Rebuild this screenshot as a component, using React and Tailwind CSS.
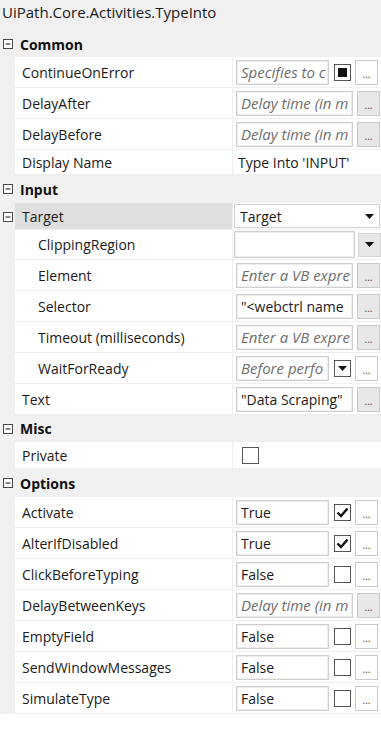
import React from "react";

const rows = [
  { type: "cat", label: "Common", h: "h-[26px]" },
  { label: "ContinueOnError", h: "h-[31px]", value: { kind: "box", text: "Specifies to c", ph: true, check: "square", btn: "white" } },
  { label: "DelayAfter", h: "h-[31px]", value: { kind: "box", text: "Delay time (in m", ph: true, btn: "gray" } },
  { label: "DelayBefore", h: "h-[31px]", value: { kind: "box", text: "Delay time (in m", ph: true, btn: "gray" } },
  { label: "Display Name", h: "h-[25px]", value: { kind: "plain", text: "Type Into 'INPUT'" } },
  { type: "cat", label: "Input", h: "h-[28px]" },
  { label: "Target", h: "h-[27px]", group: true, value: { kind: "combo", text: "Target" } },
  { label: "ClippingRegion", h: "h-[30px]", sub: true, value: { kind: "clip" } },
  { label: "Element", h: "h-[31px]", sub: true, value: { kind: "box", text: "Enter a VB expre", ph: true, btn: "gray" } },
  { label: "Selector", h: "h-[31px]", sub: true, value: { kind: "box", text: "\"<webctrl name", btn: "gray" } },
  { label: "Timeout (milliseconds)", h: "h-[31px]", sub: true, value: { kind: "box", text: "Enter a VB expre", ph: true, btn: "gray" } },
  { label: "WaitForReady", h: "h-[31px]", sub: true, value: { kind: "box", text: "Before perfo", ph: true, check: "drop", btn: "white" } },
  { label: "Text", h: "h-[31px]", value: { kind: "box", text: "\"Data Scraping\"", btn: "gray" } },
  { type: "cat", label: "Misc", h: "h-[27px]" },
  { label: "Private", h: "h-[27px]", value: { kind: "check" } },
  { type: "cat", label: "Options", h: "h-[28px]" },
  { label: "Activate", h: "h-[31px]", value: { kind: "box", text: "True", check: "checked", btn: "white" } },
  { label: "AlterIfDisabled", h: "h-[31px]", value: { kind: "box", text: "True", check: "checked", btn: "white" } },
  { label: "ClickBeforeTyping", h: "h-[31px]", value: { kind: "box", text: "False", check: "empty", btn: "white" } },
  { label: "DelayBetweenKeys", h: "h-[31px]", value: { kind: "box", text: "Delay time (in m", ph: true, btn: "gray" } },
  { label: "EmptyField", h: "h-[31px]", value: { kind: "box", text: "False", check: "empty", btn: "white" } },
  { label: "SendWindowMessages", h: "h-[31px]", value: { kind: "box", text: "False", check: "empty", btn: "white" } },
  { label: "SimulateType", h: "h-[31px]", value: { kind: "box", text: "False", check: "empty", btn: "white" } },
];

const MinusBox = () => (
  <svg width="10" height="10" viewBox="0 0 10 10" className="shrink-0">
    <rect x="0.5" y="0.5" width="9" height="9" fill="#fff" stroke="#4a4a4a" />
    <line x1="2.5" y1="5" x2="7.5" y2="5" stroke="#1a1a1a" strokeWidth="1" />
  </svg>
);

const Arrow = () => (
  <svg width="9" height="5" viewBox="0 0 9 5">
    <path d="M0 0 H9 L4.5 5 Z" fill="#111" />
  </svg>
);

const DotsBtn = ({ gray }) => (
  <div
    className={
      "w-[23px] h-[25px] shrink-0 border border-[#c9c9c9] flex items-end justify-center pb-[5px] text-[10px] leading-none text-[#444] " +
      (gray ? "bg-[#e8e8e8]" : "bg-white")
    }
  >
    ...
  </div>
);

const CheckBox = ({ state }) => (
  <div className="w-[17px] h-[17px] shrink-0 border border-[#555] bg-white flex items-center justify-center">
    {state === "square" && <div className="w-[9px] h-[9px] bg-[#111]" />}
    {state === "checked" && (
      <svg width="13" height="11" viewBox="0 0 13 11">
        <path d="M1.5 5.5 L5 9 L11.5 1.5" fill="none" stroke="#111" strokeWidth="2.4" />
      </svg>
    )}
    {state === "drop" && <Arrow />}
  </div>
);

const TextBox = ({ text, ph, wide }) => (
  <div
    className={
      "h-[25px] shrink-0 border border-[#d0d0d0] shadow-[inset_0_0_0_1px_#ededed] bg-white overflow-hidden whitespace-nowrap pl-[4px] leading-[23px] " +
      (wide ? "w-[117px] " : "w-[93px] ") +
      (ph ? "italic text-[15px] text-[#6e6e6e]" : "text-[#1a1a1a]")
    }
  >
    {text}
  </div>
);

const Value = ({ v }) => {
  if (v.kind === "plain")
    return <div className="pl-[5px] whitespace-nowrap overflow-hidden text-[#1a1a1a]">{v.text}</div>;
  if (v.kind === "check")
    return (
      <div className="pl-[9px]">
        <div className="w-[17px] h-[17px] border border-[#555] bg-white" />
      </div>
    );
  if (v.kind === "combo")
    return (
      <div className="ml-[1px] mr-[1px] h-[24px] border border-[#cfcfcf] bg-white flex items-center justify-between pl-[5px] pr-[5px]">
        <span className="text-[#1a1a1a]">{v.text}</span>
        <Arrow />
      </div>
    );
  if (v.kind === "clip")
    return (
      <div className="flex items-center gap-[3px] pl-[1px]">
        <div className="w-[121px] h-[27px] border border-[#cfcfcf] shadow-[inset_0_0_0_1px_#ededed] bg-white" />
        <div className="w-[23px] h-[24px] border border-[#d6d6d6] bg-[#e8e8e8] flex items-center justify-center">
          <Arrow />
        </div>
      </div>
    );
  return (
    <div className="flex items-center pl-[3px]">
      <TextBox text={v.text} ph={v.ph} wide={!v.check} />
      {v.check && (
        <div className="ml-[5px] mr-[4px]">
          <CheckBox state={v.check} />
        </div>
      )}
      <div className={v.check ? "" : "ml-[4px]"}>
        <DotsBtn gray={v.btn === "gray"} />
      </div>
    </div>
  );
};

const Row = ({ r }) => {
  if (r.type === "cat")
    return (
      <div className={"flex items-center bg-[#f0f0f0] " + r.h}>
        <div className="w-[20px] flex pl-[3px]">
          <MinusBox />
        </div>
        <span className="font-bold text-[#111]">{r.label}</span>
      </div>
    );
  return (
    <div className={"flex " + r.h}>
      <div className="w-[15px] shrink-0 bg-[#f0f0f0] flex items-center pl-[3px]">
        {r.group && <MinusBox />}
      </div>
      <div
        className={
          "w-[218px] shrink-0 flex items-center border-b border-r border-[#efefef] whitespace-nowrap overflow-hidden text-[#1a1a1a] " +
          (r.sub ? "pl-[23px] " : "pl-[7px] ") +
          (r.group ? "bg-[#dedede]" : "bg-white")
        }
      >
        {r.label}
      </div>
      <div className="flex-1 min-w-0 flex flex-col justify-center border-b border-[#efefef] bg-white">
        <Value v={r.value} />
      </div>
    </div>
  );
};

export default function App() {
  return (
    <div className="w-[381px] h-[733px] bg-white font-['Open_Sans',sans-serif] text-[14px] overflow-hidden">
      <div className="h-[31px] bg-[#f0f0f0] px-[2px] leading-[24px] text-[15px] text-[#1a1a1a] whitespace-nowrap">
        UiPath.Core.Activities.TypeInto
      </div>
      {rows.map((r, i) => (
        <Row key={i} r={r} />
      ))}
    </div>
  );
}
